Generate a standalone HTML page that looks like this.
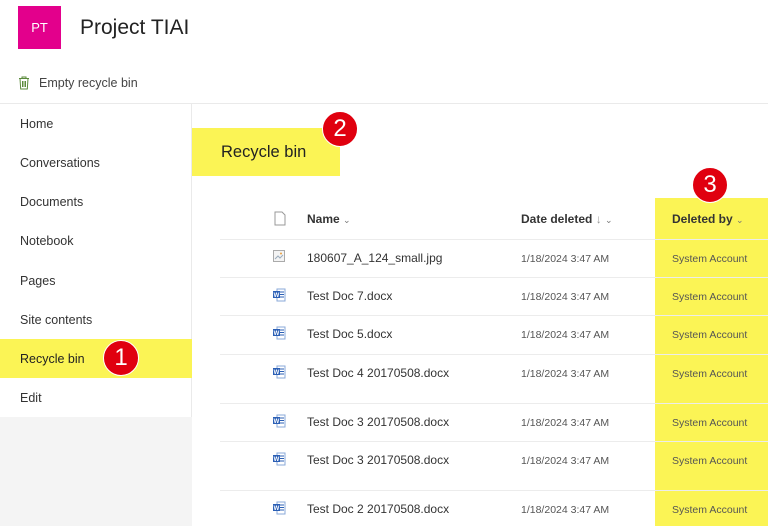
<!DOCTYPE html><html><head><style>
body{margin:0;width:768px;height:526px;overflow:hidden;background:#fff;font-family:"Liberation Sans",sans-serif;color:#333;position:relative}
.a{position:absolute}
.nav{font-size:12.5px;color:#333;left:20px}
.badge{position:absolute;width:34px;height:34px;border-radius:50%;background:#e0000f;color:#fff;font-size:24px;text-align:center;line-height:34px;border:1px solid #fff}
.row{position:absolute;left:220px;width:548px;font-size:12px;line-height:14px}
.line{position:absolute;left:220px;width:548px;height:1px;background:#ececec}
.sm{font-size:10.5px;color:#555;top:1px}
</style></head><body>
<div class="a" style="left:18px;top:6px;width:43px;height:43px;background:#e3008c;color:#fff;font-size:13px;text-align:center;line-height:43px">PT</div>
<div class="a" style="left:80px;top:16px;font-size:21px;color:#222">Project TIAI</div>
<svg class="a" style="left:18px;top:76px" width="12" height="14" viewBox="0 0 12 14"><path d="M1 2.5h10M4 2.5V1h4v1.5M2 2.5l.7 10.5h6.6L10 2.5M4.5 5v6M6 5v6M7.5 5v6" fill="none" stroke="#5a8a3a" stroke-width="1"/></svg>
<div class="a" style="left:39px;top:76px;font-size:12.5px;color:#444">Empty recycle bin</div>
<div class="a" style="left:0;top:103px;width:768px;height:1px;background:#eaeaea"></div>
<div class="a" style="left:191px;top:104px;width:1px;height:313px;background:#eaeaea"></div>
<div class="a" style="left:0;top:417px;width:192px;height:109px;background:#f4f4f4"></div>
<div class="a" style="left:0;top:339px;width:192px;height:39px;background:#fbf455"></div>
<div class="a nav" style="top:117px">Home</div>
<div class="a nav" style="top:156px">Conversations</div>
<div class="a nav" style="top:195px">Documents</div>
<div class="a nav" style="top:234px">Notebook</div>
<div class="a nav" style="top:274px">Pages</div>
<div class="a nav" style="top:313px">Site contents</div>
<div class="a nav" style="top:352px;color:#222">Recycle bin</div>
<div class="a nav" style="top:391px">Edit</div>
<div class="badge" style="left:103px;top:340px">1</div>
<div class="a" style="left:192px;top:128px;width:148px;height:48px;background:#fbf455"></div>
<div class="a" style="left:221px;top:143px;font-size:16.5px;color:#222">Recycle bin</div>
<div class="badge" style="left:322px;top:111px">2</div>
<div class="a" style="left:655px;top:198px;width:113px;height:328px;background:#fbf455"></div>
<div class="badge" style="left:692px;top:167px">3</div>
<svg class="a" style="left:274px;top:211px" width="12" height="15"><path d="M1 1h7l3 3v10H1z" fill="#fff" stroke="#999"/></svg>
<div class="row" style="top:212px;font-weight:bold;font-size:12px;color:#333"><span class="a" style="left:87px">Name <span style="font-weight:normal;color:#777;font-size:9px">&#8964;</span></span><span class="a" style="left:301px">Date deleted <span style="font-weight:normal;color:#999">&#8595;</span> <span style="font-weight:normal;color:#777;font-size:9px">&#8964;</span></span><span class="a" style="left:452px">Deleted by <span style="font-weight:normal;color:#777;font-size:9px">&#8964;</span></span></div>
<div class="line" style="top:239px"></div>
<div class="line" style="top:277px"></div>
<div class="line" style="top:315px"></div>
<div class="line" style="top:354px"></div>
<div class="line" style="top:403px"></div>
<div class="line" style="top:441px"></div>
<div class="line" style="top:490px"></div>
<svg class="a" style="left:273px;top:250px" width="12" height="12"><rect x=".5" y=".5" width="11" height="11" fill="#f4f4f4" stroke="#aaa"/><path d="M2 9l3-3 2 2 3-3" stroke="#9ab" fill="none"/><circle cx="8" cy="3.5" r="1" fill="#e8a040"/></svg>
<div class="row" style="top:251px"><span class="a" style="left:87px">180607_A_124_small.jpg</span><span class="a sm" style="left:301px">1/18/2024 3:47 AM</span><span class="a sm" style="left:452px">System Account</span></div>
<svg width="0" height="0" style="position:absolute"><defs><g id="wd"><rect x="4" y="1" width="8" height="12" fill="#fff" stroke="#8aa8d8"/><path d="M7 4h4M7 6.5h4M7 9h4" stroke="#2b5fb5"/><rect x="0" y="3" width="7" height="7" fill="#2b5fb5"/><text x="3.5" y="9" font-size="6" fill="#fff" text-anchor="middle" font-family="Liberation Sans" font-weight="bold">W</text></g></defs></svg>
<svg class="a" style="left:273px;top:288px" width="13" height="14"><use href="#wd"/></svg>
<div class="row" style="top:289px"><span class="a" style="left:87px">Test Doc 7.docx</span><span class="a sm" style="left:301px">1/18/2024 3:47 AM</span><span class="a sm" style="left:452px">System Account</span></div>
<svg class="a" style="left:273px;top:326px" width="13" height="14"><use href="#wd"/></svg>
<div class="row" style="top:327px"><span class="a" style="left:87px">Test Doc 5.docx</span><span class="a sm" style="left:301px">1/18/2024 3:47 AM</span><span class="a sm" style="left:452px">System Account</span></div>
<svg class="a" style="left:273px;top:365px" width="13" height="14"><use href="#wd"/></svg>
<div class="row" style="top:366px"><span class="a" style="left:87px">Test Doc 4 20170508.docx</span><span class="a sm" style="left:301px">1/18/2024 3:47 AM</span><span class="a sm" style="left:452px">System Account</span></div>
<svg class="a" style="left:273px;top:414px" width="13" height="14"><use href="#wd"/></svg>
<div class="row" style="top:415px"><span class="a" style="left:87px">Test Doc 3 20170508.docx</span><span class="a sm" style="left:301px">1/18/2024 3:47 AM</span><span class="a sm" style="left:452px">System Account</span></div>
<svg class="a" style="left:273px;top:452px" width="13" height="14"><use href="#wd"/></svg>
<div class="row" style="top:453px"><span class="a" style="left:87px">Test Doc 3 20170508.docx</span><span class="a sm" style="left:301px">1/18/2024 3:47 AM</span><span class="a sm" style="left:452px">System Account</span></div>
<svg class="a" style="left:273px;top:501px" width="13" height="14"><use href="#wd"/></svg>
<div class="row" style="top:502px"><span class="a" style="left:87px">Test Doc 2 20170508.docx</span><span class="a sm" style="left:301px">1/18/2024 3:47 AM</span><span class="a sm" style="left:452px">System Account</span></div>
</body></html>
